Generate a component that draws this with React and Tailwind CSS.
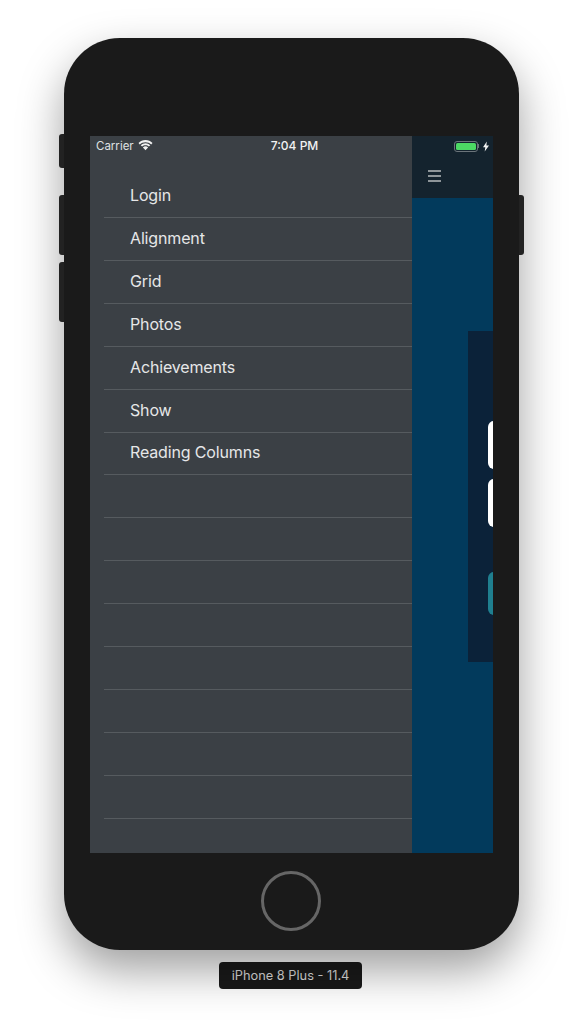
import React from 'react';

const menuItems = ['Login', 'Alignment', 'Grid', 'Photos', 'Achievements', 'Show', 'Reading Columns', '', '', '', '', '', '', '', '', ''];

// Status bar sits over both the drawer and the app behind it
const StatusBar = () => (
  <div className="absolute top-0 left-0 right-0 h-[20px] flex items-center justify-between pl-[6px] pr-[4px] text-[11.5px] text-[#dfe1e2]">
    <div className="flex items-center gap-[4px] w-[122px] pt-[1px]">
      <span>Carrier</span>
      <svg width="15" height="11" viewBox="0 0 15 11" fill="#f2f2f2" className="mb-[2px]">
        <path d="M7.500 2.300c2.200 0 4.200.8 5.700 2.200L14.500 3.100C12.700 1.200 10.200 0 7.500 0S2.300 1.200.5 3.100l1.300 1.400C3.300 3.100 5.300 2.300 7.500 2.300z" />
        <path d="M7.500 5.300c1.300 0 2.500.5 3.400 1.300l1.400-1.400C11 4 9.300 3.200 7.500 3.200S4 4 2.700 5.200l1.400 1.400c.9-.8 2.100-1.300 3.400-1.300z" />
        <path d="M7.500 6.300c-1 0-1.900.4-2.600 1.100l2.600 2.800 2.600-2.800c-.7-.7-1.600-1.100-2.600-1.100z" />
      </svg>
    </div>
    <span className="font-medium text-[12px] text-[#f2f2f2]">7:04 PM</span>
    <div className="flex items-center justify-end gap-[4px] w-[118px]">
      <div className="flex items-center">
        <div className="w-[24px] h-[11px] rounded-[3px] border border-[#6b747a] p-[1px]">
          <div className="w-full h-full rounded-[1.500px] bg-[#4cd964]" />
        </div>
        <div className="w-[1.500px] h-[4px] bg-[#6b747a]" />
      </div>
      <svg width="6" height="11" viewBox="0 0 6 10" fill="#f2f2f2">
        <path d="M3.800 0 0 5.700h2.300L1.700 10 6 3.900H3.400z" />
      </svg>
    </div>
  </div>
);

const Drawer = () => (
  <div className="w-[322px] shrink-0 h-full bg-[#3b4045] pt-[39px] pl-[14px] overflow-hidden">
    {menuItems.map((label, i) => (
      <div key={i} className="h-[42.930px] border-b border-[#565b5f] pl-[26px] pb-[2px] flex items-center text-[16px] text-[#e6e7e8] tracking-[-0.15px]">
        {label}
      </div>
    ))}
  </div>
);

const AppBehind = () => (
  <div className="w-[81px] shrink-0 h-full flex flex-col bg-[#023a5c] overflow-hidden">
    <div className="h-[62px] shrink-0 bg-[#14232e] pl-[16px] pt-[34px]">
      <div className="flex flex-col gap-[3.500px] w-[13px]">
        <div className="h-[1.500px] bg-[#8e9599]" />
        <div className="h-[1.500px] bg-[#8e9599]" />
        <div className="h-[1.500px] bg-[#8e9599]" />
      </div>
    </div>
    <div className="ml-[56px] mt-[133px] w-[300px] h-[331px] bg-[#0b2239] pl-[20px] pt-[90px]">
      <div className="h-[48px] bg-white rounded-[6px]" />
      <div className="h-[48px] mt-[10px] bg-white rounded-[6px]" />
      <div className="h-[43px] mt-[45px] bg-[#1f7f8f] rounded-[6px]" />
    </div>
  </div>
);

const App = () => (
  <div className="relative w-[583px] h-[1024px] bg-white overflow-hidden pt-[38px] font-['Inter','Liberation_Sans',sans-serif]">
    <div className="relative ml-[64px] w-[455px] h-[912px] bg-[#1a1a1a] rounded-[56px] pt-[98px] pl-[26px] shadow-[0_20px_45px_rgba(0,0,0,0.38)]">
      {/* side buttons */}
      <div className="absolute left-[-5px] top-[96px] w-[5px] h-[34px] bg-[#222222] rounded-l-[3px]" />
      <div className="absolute left-[-5px] top-[157px] w-[5px] h-[60px] bg-[#222222] rounded-l-[3px]" />
      <div className="absolute left-[-5px] top-[224px] w-[5px] h-[60px] bg-[#222222] rounded-l-[3px]" />
      <div className="absolute right-[-5px] top-[157px] w-[5px] h-[60px] bg-[#222222] rounded-r-[3px]" />

      <div className="relative w-[403px] h-[717px] flex overflow-hidden">
        <Drawer />
        <AppBehind />
        <StatusBar />
      </div>
      <div className="w-[60px] h-[60px] rounded-full border-[3px] border-[#666666] ml-[171px] mt-[18px]" />
    </div>
    <div className="w-[143px] h-[27px] mt-[12px] ml-[219px] bg-[#1a1a1a] rounded-[4px] flex items-center justify-center text-[12.800px] text-[#dddddd] pt-[1px]">
      iPhone 8 Plus - 11.4
    </div>
  </div>
);

export default App;
